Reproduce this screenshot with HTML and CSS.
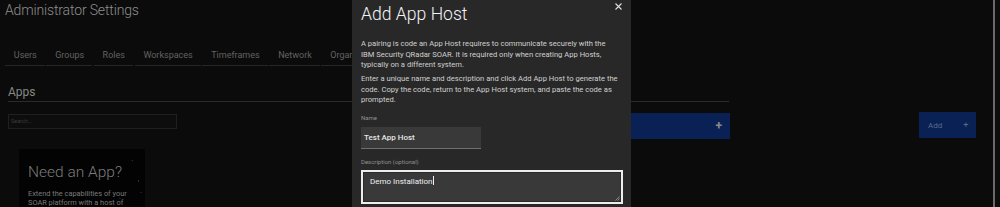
FILE: index.html
```html
<!DOCTYPE html>
<html lang="en">
<head>
<meta charset="utf-8">
<title>Administrator Settings</title>
<link rel="stylesheet" href="styles.css">
</head>
<body>
<div class="page">
  <h1 class="page-title">Administrator Settings</h1>
  <nav class="tabs">
    <span class="tab">Users</span>
    <span class="tab">Groups</span>
    <span class="tab">Roles</span>
    <span class="tab">Workspaces</span>
    <span class="tab">Timeframes</span>
    <span class="tab">Network</span>
    <span class="tab">Organization</span>
  </nav>
  <h2 class="section-title">Apps</h2>
  <div class="toolbar">
    <div class="search">Search...</div>
    <div class="bluebar"><span class="plus">+</span></div>
    <div class="add-btn"><span>Add</span><span class="add-plus">+</span></div>
  </div>
  <div class="card">
    <div class="card-title">Need an App?</div>
    <p class="card-text">Extend the capabilities of your<br>SOAR platform with a host of</p>
  </div>
</div>
<div class="scrollbar"></div>
<div class="rest"></div>

<div class="modal">
  <svg class="close" width="7" height="7" viewBox="0 0 7 7"><path d="M0.5 0.5L6.5 6.5M6.5 0.5L0.5 6.5" stroke="#e0e0e0" stroke-width="1.1"/></svg>
  <h2 class="modal-title">Add App Host</h2>
  <p class="modal-text">A pairing is code an App Host requires to communicate securely with the<br>IBM Security QRadar SOAR. It is required only when creating App Hosts,<br>typically on a different system.</p>
  <p class="modal-text second">Enter a unique name and description and click Add App Host to generate the<br>code. Copy the code, return to the App Host system, and paste the code as<br>prompted.</p>
  <div class="label">Name</div>
  <div class="input">Test App Host</div>
  <div class="label desc">Description (optional)</div>
  <div class="textarea">Demo Installation<span class="caret"></span>
    <svg class="grip" width="5" height="5" viewBox="0 0 5 5"><path d="M4.5 0.5L0.5 4.5M4.5 2.5L2.5 4.5" stroke="#9a9a9a" stroke-width="0.8"/></svg>
  </div>
</div>
</body>
</html>
```
FILE: styles.css
```css
html, body {
  margin: 0;
  padding: 0;
}
body {
  background: #0b0b0b;
  display: flex;
  height: 207px;
  overflow: hidden;
  font-family: Roboto, "Liberation Sans", sans-serif;
  position: relative;
}
.page {
  width: 993px;
  flex: none;
  height: 207px;
  overflow: hidden;
}
.scrollbar {
  width: 2px;
  background: #6a6a6a;
  flex: none;
}
.rest {
  flex: 1;
  background: #0d0d0d;
}
.page-title {
  margin: 0;
  padding: 1px 0 0 5px;
  font-size: 14px;
  line-height: 18px;
  font-weight: 300;
  color: #8e8e8e;
  letter-spacing: -0.15px;
}
.tabs {
  display: flex;
  gap: 1.5px;
  margin: 26px 0 0 5px;
  width: 347px;
  overflow: hidden;
}
.tab {
  flex: none;
  font-size: 9px;
  line-height: 12px;
  padding: 4px 8.2px 4px 8.8px;
  color: #626262;
  border-bottom: 1px solid #262626;
}
.section-title {
  margin: 19px 0 0 8px;
  width: 721px;
  font-size: 12px;
  line-height: 14px;
  font-weight: 400;
  color: #878787;
  padding-bottom: 2px;
  border-bottom: 1px solid #2a2a2a;
}
.toolbar {
  display: flex;
  align-items: flex-start;
  margin-top: 11px;
}
.search {
  margin: 1px 0 0 8px;
  width: 165px;
  height: 13px;
  border: 1px solid #1f1f1f;
  background: #0d0d0d;
  font-size: 5.5px;
  line-height: 13px;
  padding-left: 2px;
  color: #3c3c3c;
  box-sizing: content-box;
}
.bluebar {
  margin-left: 200px;
  width: 353px;
  height: 26px;
  background: #0a2156;
  display: flex;
  align-items: center;
  justify-content: flex-end;
}
.plus {
  color: #8a8a8a;
  font-size: 12px;
  font-weight: 700;
  margin-right: 8px;
  line-height: 12px;
}
.add-btn {
  margin: -1px 0 0 189px;
  width: 57px;
  height: 26px;
  background: #0a2156;
  display: flex;
  align-items: center;
  font-size: 8px;
  color: #5d6a88;
  padding-left: 9px;
  box-sizing: border-box;
}
.add-plus {
  margin-left: 21px;
  font-size: 9px;
}
.card {
  margin: 10px 0 0 19px;
  width: 126px;
  height: 58px;
  padding: 13.7px 0 0 9px;
  box-sizing: border-box;
  background-color: #030303;
  background-image:
    radial-gradient(circle at 90% 20%, #2a2a3a 0.6px, transparent 1px),
    radial-gradient(circle at 95% 55%, #2a2a3a 0.6px, transparent 1px),
    radial-gradient(circle at 80% 85%, #22222e 0.6px, transparent 1px),
    radial-gradient(circle at 97% 75%, #22222e 0.6px, transparent 1px);
}
.card-title {
  font-size: 15.5px;
  line-height: 18px;
  font-weight: 300;
  color: #7b7b7b;
}
.card-text {
  margin: 8px 0 0;
  font-size: 7.4px;
  line-height: 9.5px;
  color: #7a7a7a;
}
.modal {
  position: absolute;
  left: 352px;
  top: 0;
  width: 279px;
  height: 207px;
  overflow: hidden;
  background: #282828;
  padding: 4px 9px 0;
  box-sizing: border-box;
}
.close {
  position: absolute;
  left: 263px;
  top: 3px;
}
.modal-title {
  margin: 0;
  font-size: 17.6px;
  line-height: 20px;
  font-weight: 300;
  color: #f4f4f4;
}
.modal-text {
  margin: 15.3px 0 0;
  font-size: 7.6px;
  line-height: 10.5px;
  color: #d0d0d0;
  white-space: nowrap;
}
.modal-text.second {
  margin-top: 3.5px;
}
.label {
  margin-top: 8.2px;
  font-size: 6px;
  line-height: 8px;
  color: #8f8f8f;
}
.label.desc {
  margin-top: 9px;
}
.input {
  margin-top: 5px;
  width: 117px;
  height: 21px;
  background: #393939;
  border-bottom: 1px solid #6f6f6f;
  font-size: 8px;
  font-weight: 500;
  line-height: 21px;
  padding-left: 3px;
  box-sizing: content-box;
  color: #e6e6e6;
}
.textarea {
  position: relative;
  margin-top: 4px;
  width: 262px;
  height: 34px;
  box-sizing: border-box;
  border: 2px solid #ededed;
  box-shadow: inset 0 0 0 1px #2a2a2a;
  background: #393939;
  font-size: 8px;
  line-height: 10px;
  padding: 4.3px 0 0 7px;
  color: #f0f0f0;
}
.caret {
  display: inline-block;
  width: 1px;
  height: 9px;
  background: #f0f0f0;
  vertical-align: -1.5px;
  margin-left: 0.5px;
}
.grip {
  position: absolute;
  right: 1px;
  bottom: 1px;
}
```
